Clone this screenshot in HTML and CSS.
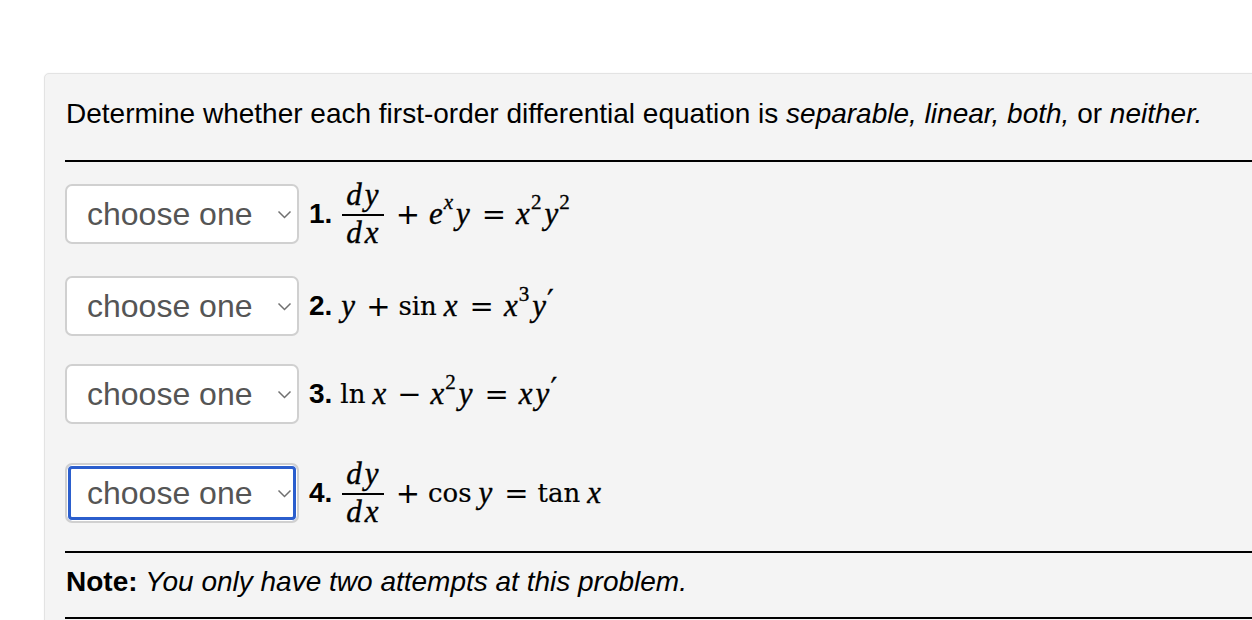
FILE: index.html
```html
<!DOCTYPE html>
<html>
<head>
<meta charset="utf-8">
<link rel="stylesheet" href="styles.css">
</head>
<body>
<div class="page">
  <div class="panel">
    <p class="prompt">Determine whether each first-order differential equation is <em>separable, linear, both,</em> or <em>neither.</em></p>
    <hr class="rule rule-top">
    <div class="items">
      <div class="item item-frac">
        <div class="select"><span class="select-text">choose one</span><svg class="chev" width="15" height="9" viewBox="0 0 15 9"><path d="M1.5 1.5 L7.5 7.5 L13.5 1.5" fill="none" stroke="#707070" stroke-width="1.5"/></svg></div>
        <span class="num">1.</span>
        <span class="math">
          <span class="frac"><span class="fn"><i>dy</i></span><span class="fd"><i>dx</i></span></span><span class="bin">+</span><i>e</i><sup><i>x</i></sup><i>y</i><span class="rel">=</span><i>x</i><sup>2</sup><i>y</i><sup>2</sup>
        </span>
      </div>
      <div class="item">
        <div class="select"><span class="select-text">choose one</span><svg class="chev" width="15" height="9" viewBox="0 0 15 9"><path d="M1.5 1.5 L7.5 7.5 L13.5 1.5" fill="none" stroke="#707070" stroke-width="1.5"/></svg></div>
        <span class="num">2.</span>
        <span class="math"><i>y</i><span class="bin">+</span><span class="fn-op">sin</span><i>x</i><span class="rel">=</span><i>x</i><sup>3</sup><i>y</i><span class="prime">′</span></span>
      </div>
      <div class="item">
        <div class="select"><span class="select-text">choose one</span><svg class="chev" width="15" height="9" viewBox="0 0 15 9"><path d="M1.5 1.5 L7.5 7.5 L13.5 1.5" fill="none" stroke="#707070" stroke-width="1.5"/></svg></div>
        <span class="num">3.</span>
        <span class="math"><span class="fn-op">ln</span><i>x</i><span class="bin">−</span><i>x</i><sup>2</sup><i>y</i><span class="rel">=</span><i>xy</i><span class="prime">′</span></span>
      </div>
      <div class="item item-frac item-last">
        <div class="select select-focus"><span class="select-text">choose one</span><svg class="chev" width="15" height="9" viewBox="0 0 15 9"><path d="M1.5 1.5 L7.5 7.5 L13.5 1.5" fill="none" stroke="#707070" stroke-width="1.5"/></svg></div>
        <span class="num">4.</span>
        <span class="math">
          <span class="frac"><span class="fn"><i>dy</i></span><span class="fd"><i>dx</i></span></span><span class="bin">+</span><span class="fn-op">cos</span><i>y</i><span class="rel">=</span><span class="fn-op">tan</span><i>x</i>
        </span>
      </div>
    </div>
    <hr class="rule rule-mid">
    <p class="note"><strong>Note:</strong> <em>You only have two attempts at this problem.</em></p>
    <hr class="rule rule-bottom">
  </div>
</div>
</body>
</html>
```

FILE: styles.css
```css
html, body {
  margin: 0;
  padding: 0;
  background: #ffffff;
  overflow: hidden;
}

.page {
  padding: 73px 0 0 44px;
}

.panel {
  width: 1300px;
  height: 620px;
  background: #f4f4f4;
  border: 1px solid #e3e3e3;
  border-radius: 5px;
  box-shadow: 0 0 2px rgba(0, 0, 0, 0.06);
  padding: 24px 0 0 20px;
  box-sizing: border-box;
  font-family: "Liberation Sans", Arial, sans-serif;
  color: #000;
}

.prompt {
  margin: 0 0 0 1px;
  font-size: 28px;
  line-height: 32px;
}

.prompt em,
.note em {
  font-style: italic;
}

.rule {
  border: 0;
  border-top: 2px solid #000;
  margin: 0;
  height: 0;
}

.rule-top {
  margin-top: 30px;
}

.items {
  display: flex;
  flex-direction: column;
  gap: 28px;
  margin-top: 18px;
}

.item {
  display: flex;
  align-items: center;
  height: 60px;
}

.item-frac {
  height: 68px;
}

.item-last {
  margin-top: 7px;
}

.select {
  width: 234px;
  height: 60px;
  box-sizing: border-box;
  background: #fff;
  border: 2px solid #d0d0d0;
  border-radius: 7px;
  display: flex;
  align-items: center;
  padding-left: 20px;
  padding-right: 5px;
  flex: none;
}

.select-focus {
  box-shadow: inset 0 0 0 1px #fff, inset 0 0 0 4px #2b5ecd;
}

.select-text {
  font-size: 32px;
  color: #555;
  flex: 1;
}

.chev {
  flex: none;
  margin-top: 1px;
}

.num {
  font-weight: bold;
  font-size: 28px;
  margin-left: 10px;
  margin-right: 8px;
}

.math {
  font-family: "Liberation Serif", "Times New Roman", serif;
  font-size: 31px;
  display: inline-flex;
  align-items: center;
  white-space: nowrap;
  -webkit-text-stroke: 0.35px #000;
}

.math i {
  font-style: italic;
  letter-spacing: 3px;
  padding-left: 1px;
}

.math sup {
  font-size: 21px;
  font-style: normal;
  vertical-align: 0;
  position: relative;
  top: -12px;
  margin-left: -2px;
  margin-right: 2px;
}

.math sup i {
  letter-spacing: 0;
  padding-left: 0;
}

.bin,
.rel {
  font-family: "DejaVu Sans", sans-serif;
  font-size: 29px;
  -webkit-text-stroke: 0;
}

.bin {
  margin: 0 8px;
}

.rel {
  margin: 0 9px;
}

.fn-op {
  font-family: "DejaVu Serif", serif;
  font-size: 26px;
  -webkit-text-stroke: 0.2px #000;
  margin-right: 6px;
}

.prime {
  font-family: "DejaVu Sans", sans-serif;
  font-size: 30px;
  -webkit-text-stroke: 0.3px #000;
  position: relative;
  top: -6px;
  margin-left: -2px;
}

.frac {
  display: inline-flex;
  flex-direction: column;
  align-items: center;
  margin-left: 2px;
  margin-right: 4px;
  line-height: 30px;
}

.fn {
  padding: 0 2px 4px 3px;
  border-bottom: 2px solid #000;
}

.fd {
  padding: 2px 2px 0 3px;
}

.note {
  margin: 13px 0 0 1px;
  font-size: 28px;
  line-height: 32px;
}

.rule-mid {
  margin-top: 24px;
}

.rule-bottom {
  margin-top: 19px;
}
```
